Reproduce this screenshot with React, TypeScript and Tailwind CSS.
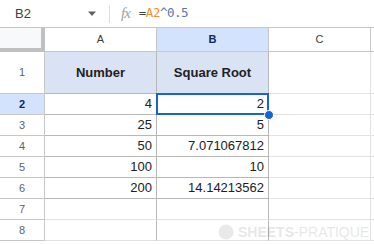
import React from "react";

const COLS = ["A", "B", "C"];
const COL_W = [112, 112, 102];
const rows: { n: number; a: string; b: string }[] = [
  { n: 2, a: "4", b: "2" },
  { n: 3, a: "25", b: "5" },
  { n: 4, a: "50", b: "7.071067812" },
  { n: 5, a: "100", b: "10" },
  { n: 6, a: "200", b: "14.14213562" },
  { n: 7, a: "", b: "" },
  { n: 8, a: "", b: "" },
];

function RowHead({ n, active, h }: { n: number; active?: boolean; h: string }) {
  return (
    <div
      className={`${h} w-[45px] shrink-0 flex items-center justify-center border-r border-b border-[#c7c7c7] text-[11px] ${
        active ? "bg-[#d3e3fd] font-bold text-[#0b2a5c]" : "bg-white text-[#5f6368]"
      }`}
    >
      {n}
    </div>
  );
}

export default function App() {
  return (
    <div className="relative w-[374px] h-[244px] overflow-hidden bg-white font-['Liberation_Sans',Arial,sans-serif] text-[#202124]">
      {/* formula bar */}
      <div className="h-[28px] flex items-center border-b border-[#c7c7c7]">
        <div className="w-[86px] pl-[15px] text-[13px] text-[#3c4043]">B2</div>
        <svg width="10" height="6" viewBox="0 0 10 6" className="ml-[1px]">
          <path d="M1 0.5h8L5 5z" fill="#5f6368" />
        </svg>
        <div className="ml-[12px] w-px h-[18px] bg-[#dadce0]" />
        <span className="ml-[11px] text-[15px] italic text-[#9aa0a6] font-['Liberation_Serif',serif] tracking-[-1px]">fx</span>
        <span className="ml-[9px] text-[12.5px] font-['DejaVu_Sans_Mono',monospace] tracking-[-0.5px]">
          <span className="text-[#3c4043]">=</span>
          <span className="text-[#f4902c]">A2</span>
          <span className="text-[#5876b8]">^0.5</span>
        </span>
      </div>

      {/* column headers */}
      <div className="flex h-[24px]">
        <div className="w-[45px] shrink-0 h-[24px] border-r-[4px] border-b-[4px] border-[#c0c0c0] bg-[#f8f9fa]" />
        {COLS.map((c, i) => (
          <div
            key={c}
            style={{ width: COL_W[i] }}
            className={`shrink-0 flex items-center justify-center border-r border-b border-[#c7c7c7] text-[11px] ${
              c === "B" ? "bg-[#d3e3fd] font-bold text-[#0b2a5c]" : "bg-white text-[#3c4043]"
            }`}
          >
            {c}
          </div>
        ))}
        <div className="flex-1 border-b border-[#c7c7c7]" />
      </div>

      {/* row 1 */}
      <div className="flex h-[42px]">
        <RowHead n={1} h="h-[42px]" />
        <div className="w-[112px] shrink-0 flex items-center justify-center bg-[#dae3f3] border-r border-b border-[#b7b7b7] text-[13px] font-bold">
          Number
        </div>
        <div className="w-[112px] shrink-0 flex items-center justify-center bg-[#dae3f3] border-r border-b border-[#b7b7b7] text-[13px] font-bold">
          Square Root
        </div>
        <div className="w-[102px] shrink-0 border-r border-b border-[#e2e2e2]" />
        <div className="flex-1 border-b border-[#e2e2e2]" />
      </div>

      {rows.map((r) => {
        const inData = r.n <= 6;
        const line = inData ? "border-[#b7b7b7]" : "border-[#e2e2e2]";
        const edge = inData ? "" : "border-r-[#b7b7b7]";
        return (
          <div key={r.n} className="flex h-[21px]">
            <RowHead n={r.n} active={r.n === 2} h="h-[21px]" />
            <div className={`w-[112px] shrink-0 flex items-end justify-end pr-[4px] pb-[1px] border-b border-r ${line} ${edge} text-[13px]`}>
              {r.a}
            </div>
            <div className={`relative w-[112px] shrink-0 flex items-end justify-end pr-[4px] pb-[1px] border-b border-r ${line} ${edge} text-[13px]`}>
              {r.b}
              {r.n === 2 && (
                <>
                  <div className="absolute z-10 -left-px -top-px -right-px -bottom-px border-2 border-[#1a63d6]" />
                  <div className="absolute z-20 -right-[6px] -bottom-[6px] w-[10px] h-[10px] rounded-full bg-[#1a63d6] border border-white" />
                </>
              )}
            </div>
            <div className="w-[102px] shrink-0 border-r border-b border-[#e2e2e2]" />
            <div className="flex-1 border-b border-[#e2e2e2]" />
          </div>
        );
      })}

      {/* watermark */}
      <div className="absolute left-[218px] top-[224px] flex items-center gap-[4px] whitespace-nowrap opacity-[0.12] pointer-events-none">
        <svg width="16" height="16" viewBox="0 0 16 16">
          <circle cx="8" cy="8" r="7.5" fill="#555" />
        </svg>
        <span className="text-[14px] leading-[16px] font-bold text-[#444]">
          SHEETS<span className="font-normal">-PRATIQUE</span>
        </span>
      </div>
    </div>
  );
}
